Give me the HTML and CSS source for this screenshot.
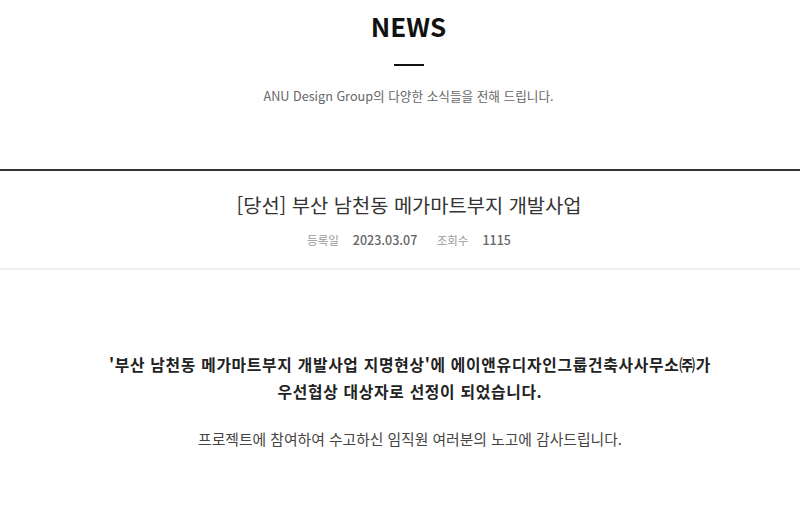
FILE: index.html
```html
<!DOCTYPE html>
<html lang="ko">
<head>
<meta charset="utf-8">
<title>NEWS</title>
<link rel="stylesheet" href="styles.css">
</head>
<body>
<header class="page-head">
  <h1 class="page-title">NEWS</h1>
  <span class="page-bar"></span>
  <p class="page-sub">ANU Design Group의 다양한 소식들을 전해 드립니다.</p>
</header>
<article class="post">
  <div class="post-head">
    <h2 class="post-title">[당선] 부산 남천동 메가마트부지 개발사업</h2>
    <div class="post-meta">
      <span class="meta-label">등록일</span><span class="meta-value">2023.03.07</span>
      <span class="meta-label meta-gap">조회수</span><span class="meta-value">1115</span>
    </div>
  </div>
  <div class="post-body">
    <p class="lead">'부산 남천동 메가마트부지 개발사업 지명현상'에 에이앤유디자인그룹건축사사무소㈜가<br>우선협상 대상자로 선정이 되었습니다.</p>
    <p class="thanks">프로젝트에 참여하여 수고하신 임직원 여러분의 노고에 감사드립니다.</p>
  </div>
</article>
</body>
</html>
```
FILE: styles.css
```css
html, body {
  margin: 0;
  padding: 0;
  background: #fff;
}
body {
  font-family: "Noto Sans CJK KR", "Noto Sans", sans-serif;
  color: #222;
}
.page-head {
  display: flex;
  flex-direction: column;
  align-items: center;
  padding-top: 6px;
  padding-left: 17px;
}
.page-title {
  margin: 0;
  font-size: 26px;
  line-height: 40px;
  font-weight: 700;
  color: #111;
}
.page-bar {
  display: block;
  width: 30px;
  height: 2px;
  background: #111;
  margin-top: 18px;
}
.page-sub {
  margin: 20px 0 0;
  font-size: 12.65px;
  line-height: 20px;
  color: #666;
}
.post {
  margin-top: 63px;
  border-top: 2px solid #333;
}
.post-head {
  text-align: center;
  padding: 19px 0 18px 18px;
  border-bottom: 2px solid #f0f0f0;
}
.post-title {
  margin: 0;
  font-size: 19.8px;
  line-height: 30px;
  font-weight: 400;
  color: #333;
}
.post-meta {
  margin-top: 10px;
  font-size: 12px;
  line-height: 20px;
}
.meta-label {
  color: #999;
  font-size: 11.5px;
  margin-right: 14px;
}
.meta-gap {
  margin-left: 16px;
}
.meta-value {
  color: #666;
  font-size: 12.5px;
  font-weight: 500;
}
.post-body {
  text-align: center;
  padding-top: 81px;
  padding-left: 20px;
}
.lead {
  margin: 0;
  font-size: 15.8px;
  line-height: 27px;
  font-weight: 700;
  color: #222;
  letter-spacing: 0.7px;
}
.thanks {
  margin: 22px 0 0;
  font-size: 14.8px;
  line-height: 24px;
  color: #444;
}
```
